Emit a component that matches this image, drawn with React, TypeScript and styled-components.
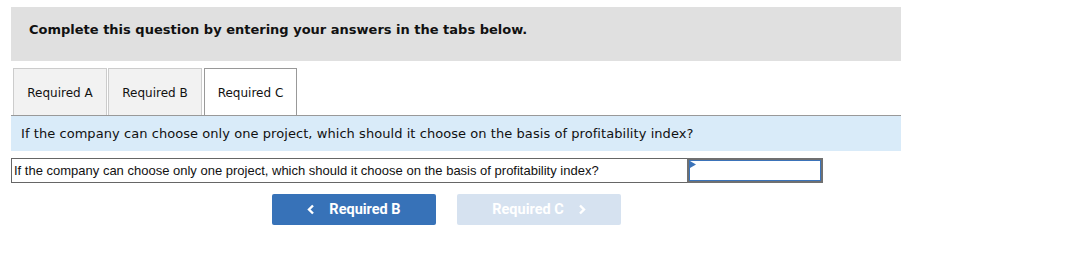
import React from "react";
import styled, { createGlobalStyle } from "styled-components";

const Global = createGlobalStyle`
  html, body { margin: 0; padding: 0; background: #fff; }
  * { box-sizing: border-box; }
`;

const Page = styled.div`
  padding: 7px 0 0 11px;
  width: 901px;
  font-family: Verdana, "DejaVu Sans", sans-serif;
  color: #111;
`;

const Header = styled.div`
  height: 54px;
  background: #e0e0e0;
  padding: 15px 0 0 18px;
  font-size: 13px;
  font-weight: bold;
  line-height: 16px;
`;

const Tabs = styled.div`
  display: flex;
  margin-top: 7px;
  padding-left: 2px;
  height: 47px;
  align-items: stretch;
`;

const Tab = styled.div<{ $active?: boolean; $gap: number }>`
  width: ${(p) => (p.$active ? 93 : 94)}px;
  margin-right: ${(p) => p.$gap}px;
  display: flex;
  align-items: center;
  justify-content: center;
  font-size: 12px;
  border: 1px solid ${(p) => (p.$active ? "#999" : "#ccc")};
  border-bottom: none;
  background: ${(p) => (p.$active ? "#fff" : "#f2f2f2")};
  padding-top: 1px;
`;

const Band = styled.div`
  border-top: 1px solid #999;
  background: #d9ebf9;
  height: 36px;
  padding: 0 0 0 10px;
  display: flex;
  align-items: center;
  font-size: 13px;
  letter-spacing: 0.06px;
`;

const AnswerRow = styled.div`
  display: flex;
  margin-top: 7px;
  width: 812px;
  height: 25px;
`;

const LabelCell = styled.div`
  flex: 0 0 676px;
  border: 1px solid #666;
  border-right: none;
  font-family: Arial, "Liberation Sans", sans-serif;
  font-size: 13px;
  display: flex;
  align-items: center;
  padding-left: 2px;
`;

const InputCell = styled.div`
  position: relative;
  flex: 1;
  border: 2px solid #707070;
`;

const Input = styled.input`
  width: 100%;
  height: 100%;
  border: 1px solid #3b73b9;
  outline: none;
  margin: 0;
  display: block;
  background: #fff;
`;

const Flag = styled.svg`
  position: absolute;
  left: 1px;
  top: 1px;
`;

const Buttons = styled.div`
  display: flex;
  gap: 21px;
  margin-top: 11px;
  padding-left: 261px;
`;

const NavButton = styled.button<{ $disabled?: boolean }>`
  width: 164px;
  height: 31px;
  border: none;
  border-radius: 2px;
  background: ${(p) => (p.$disabled ? "#d6e2f0" : "#3772b8")};
  color: #fff;
  font-family: Roboto, Arial, sans-serif;
  font-weight: bold;
  font-size: 14.5px;
  display: flex;
  align-items: center;
  justify-content: center;
  gap: 14px;
  padding: 0;
  cursor: ${(p) => (p.$disabled ? "default" : "pointer")};
`;

const Chevron = ({ dir }: { dir: "left" | "right" }) => (
  <svg width="8" height="11" viewBox="0 0 8 11">
    <path
      d={dir === "left" ? "M6 1.5 L2 5.5 L6 9.5" : "M2 1.5 L6 5.5 L2 9.5"}
      fill="none"
      stroke="#fff"
      strokeWidth="2.4"
    />
  </svg>
);

export default function App() {
  const q =
    "If the company can choose only one project, which should it choose on the basis of profitability index?";
  return (
    <>
      <Global />
      <Page>
        <Header>Complete this question by entering your answers in the tabs below.</Header>
        <Tabs>
          <Tab $gap={1}>Required A</Tab>
          <Tab $gap={2}>Required B</Tab>
          <Tab $active $gap={0}>Required C</Tab>
        </Tabs>
        <Band>{q}</Band>
        <AnswerRow>
          <LabelCell>{q}</LabelCell>
          <InputCell>
            <Input aria-label="answer" />
            <Flag width="6" height="7" viewBox="0 0 6 7">
              <path d="M0 0 L6 3.5 L0 7 Z" fill="#3b73b9" />
            </Flag>
          </InputCell>
        </AnswerRow>
        <Buttons>
          <NavButton>
            <Chevron dir="left" />
            <span>Required B</span>
          </NavButton>
          <NavButton $disabled>
            <span>Required C</span>
            <Chevron dir="right" />
          </NavButton>
        </Buttons>
      </Page>
    </>
  );
}
